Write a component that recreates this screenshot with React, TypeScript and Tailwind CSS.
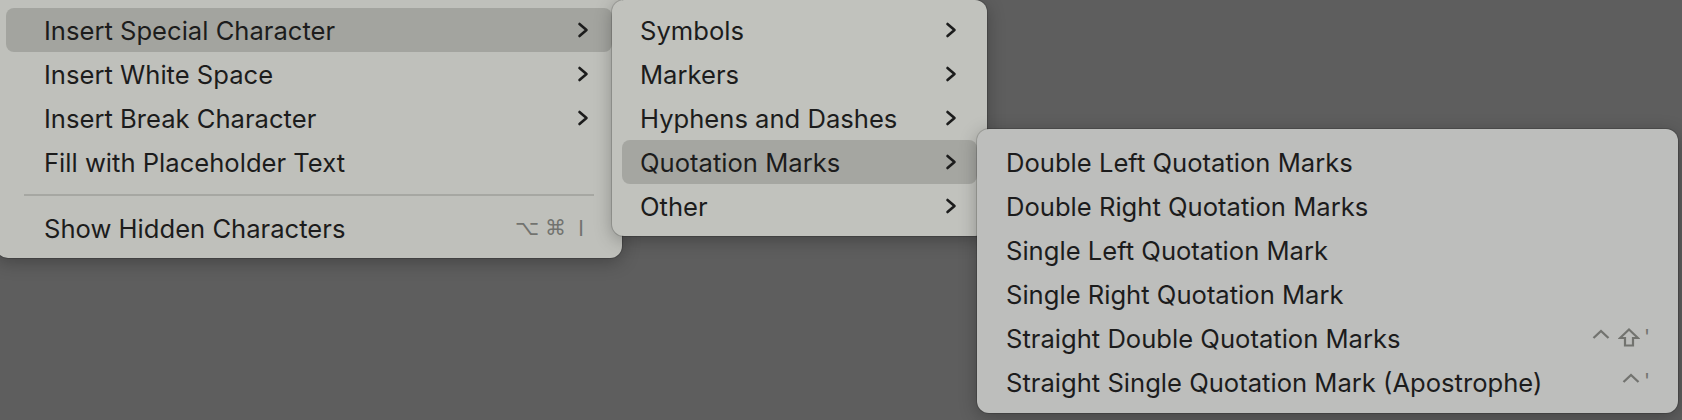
import React from "react";

const Chevron = () => (
  <svg width="12" height="16" viewBox="0 0 12 16" fill="none">
    <path d="M2.5 2 L9.5 8 L2.5 14" stroke="#1c1c1c" strokeWidth="2.6" strokeLinecap="round" strokeLinejoin="round" />
  </svg>
);

const Caret = () => (
  <svg width="18" height="10" viewBox="0 0 18 10" fill="none">
    <path d="M1.5 9 L9 2 L16.5 9" stroke="#72736f" strokeWidth="2.3" strokeLinejoin="miter" />
  </svg>
);

const Shift = () => (
  <svg width="22" height="19" viewBox="0 0 22 19" fill="none">
    <path d="M11 1.5 L20 10 L15 10 L15 17.5 L7 17.5 L7 10 L2 10 Z" stroke="#72736f" strokeWidth="2.2" strokeLinejoin="miter" />
  </svg>
);

type RowProps = {
  label: string;
  sub?: boolean;
  active?: boolean;
  shortcut?: React.ReactNode;
  pl: string;
  pr: string;
  hl?: string;
};

const Row = ({ label, sub, active, shortcut, pl, pr, hl }: RowProps) => (
  <div className={`flex items-center h-[44px] rounded-[8px] ${pl} ${pr} ${active ? hl : ""}`}>
    <span className="flex-1 text-[#1c1c1c] whitespace-nowrap pt-[2px]">{label}</span>
    {sub && <Chevron />}
    {shortcut}
  </div>
);

const OptCmdI = (
  <span className="flex items-center text-[#72736f] text-[21px] pt-[1px]">
    <span className="tracking-[6px]" style={{ fontFamily: "'DejaVu Sans', sans-serif" }}>⌥⌘</span>
    <span className="w-[12px] text-right">I</span>
  </span>
);

const CtrlShiftQuote = (
  <span className="flex items-start self-start mt-[12px] h-[20px]">
    <span className="mt-[1px]"><Caret /></span>
    <span className="ml-[8px]"><Shift /></span>
    <span className="w-[10px] text-right text-[#72736f] text-[20px] leading-none mt-[-1px]">'</span>
  </span>
);

const CtrlQuote = (
  <span className="flex items-start self-start mt-[12px] h-[20px]">
    <span className="mt-[1px]"><Caret /></span>
    <span className="w-[10px] text-right text-[#72736f] text-[20px] leading-none mt-[-1px]">'</span>
  </span>
);

export default function App() {
  return (
    <div
      className="relative w-[1682px] h-[420px] overflow-hidden bg-[#5e5e5e] text-[25.6px] leading-none"
      style={{ fontFamily: "Inter, 'DejaVu Sans', sans-serif" }}
    >
      {/* Menu 1 */}
      <div className="absolute left-[-4px] top-[-12px] w-[626px] h-[270px] rounded-[12px] bg-[#bfc0bb] shadow-[0_4px_18px_rgba(0,0,0,0.28)] ring-1 ring-black/15 pt-[20px] pb-[7px] px-[10px]">
        <Row label="Insert Special Character" sub active pl="pl-[38px]" pr="pr-[23px]" hl="bg-[#a3a49f]" />
        <Row label="Insert White Space" sub pl="pl-[38px]" pr="pr-[23px]" />
        <Row label="Insert Break Character" sub pl="pl-[38px]" pr="pr-[23px]" />
        <Row label="Fill with Placeholder Text" pl="pl-[38px]" pr="pr-[23px]" />
        <div className="h-[22px] flex items-center px-[18px]">
          <div className="h-[2px] w-full bg-[#a6a7a2]" />
        </div>
        <Row label="Show Hidden Characters" shortcut={OptCmdI} pl="pl-[38px]" pr="pr-[28px]" />
      </div>

      {/* Menu 2 */}
      <div className="absolute left-[612px] top-[0px] w-[375px] h-[236px] rounded-[12px] bg-[#c1c2bd] shadow-[0_4px_18px_rgba(0,0,0,0.28)] ring-1 ring-black/15 py-[8px] px-[10px]">
        <Row label="Symbols" sub pl="pl-[18px]" pr="pr-[20px]" />
        <Row label="Markers" sub pl="pl-[18px]" pr="pr-[20px]" />
        <Row label="Hyphens and Dashes" sub pl="pl-[18px]" pr="pr-[20px]" />
        <Row label="Quotation Marks" sub active pl="pl-[18px]" pr="pr-[20px]" hl="bg-[#a5a6a1]" />
        <Row label="Other" sub pl="pl-[18px]" pr="pr-[20px]" />
      </div>

      {/* Menu 3 */}
      <div className="absolute left-[977px] top-[129px] w-[701px] h-[284px] rounded-[12px] bg-[#bdbebc] shadow-[0_4px_18px_rgba(0,0,0,0.28)] ring-1 ring-black/15 pt-[11px] pb-[8px] px-[10px]">
        <Row label="Double Left Quotation Marks" pl="pl-[19px]" pr="pr-[18px]" />
        <Row label="Double Right Quotation Marks" pl="pl-[19px]" pr="pr-[18px]" />
        <Row label="Single Left Quotation Mark" pl="pl-[19px]" pr="pr-[18px]" />
        <Row label="Single Right Quotation Mark" pl="pl-[19px]" pr="pr-[18px]" />
        <Row label="Straight Double Quotation Marks" shortcut={CtrlShiftQuote} pl="pl-[19px]" pr="pr-[18px]" />
        <Row label="Straight Single Quotation Mark (Apostrophe)" shortcut={CtrlQuote} pl="pl-[19px]" pr="pr-[18px]" />
      </div>
    </div>
  );
}
